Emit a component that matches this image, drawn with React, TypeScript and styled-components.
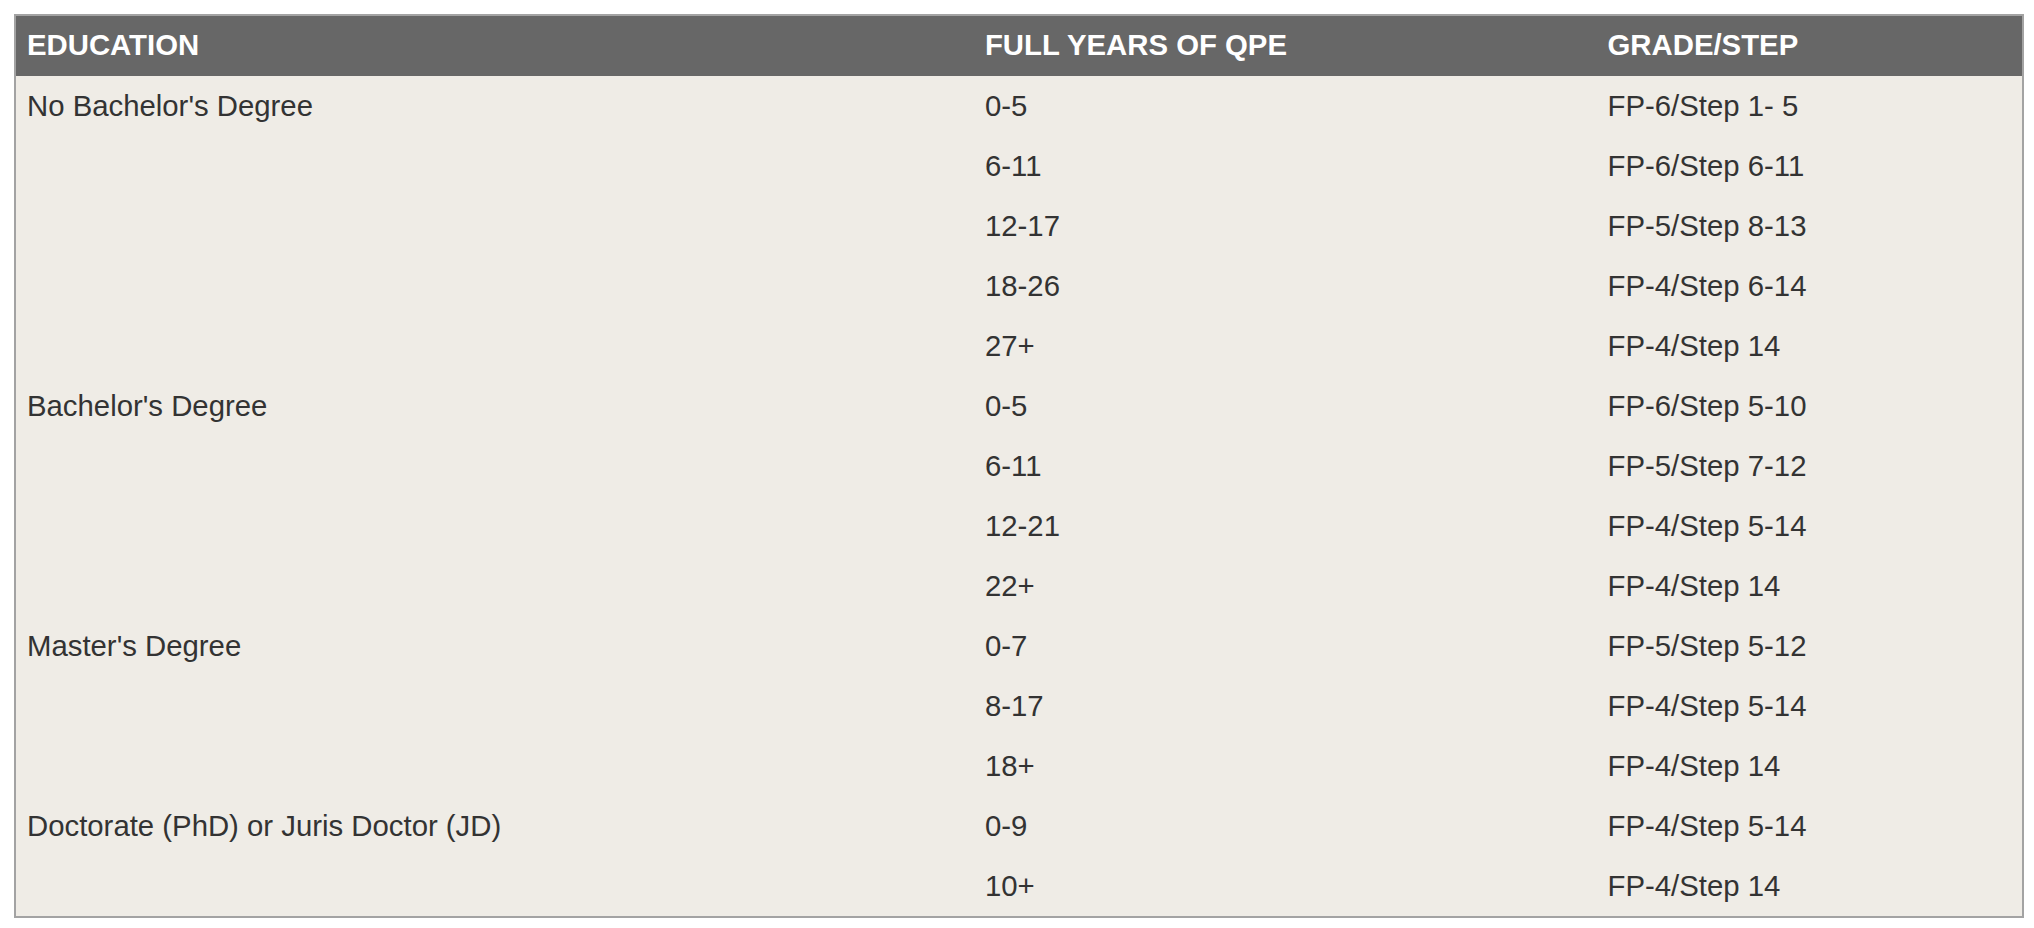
import React from 'react';
import styled, { createGlobalStyle } from 'styled-components';

const GlobalStyle = createGlobalStyle`
    body {
        margin: 14px 10px 0 14px;
        background: #fff;
        font-family: 'Liberation Sans', Arial, sans-serif;
    }
`;

const Table = styled.table`
    width: 100%;
    border-collapse: collapse;
    table-layout: fixed;
    border: 2px solid #a3a3a3;
    background-color: #efece6;
    color: #333;
`;

const HeadRow = styled.tr`
    background-color: #676767;
`;

const Th = styled.th<{ w: string }>`
    width: ${(props) => props.w};
    height: 60px;
    box-sizing: border-box;
    padding: 12px 11px 14px;
    text-align: left;
    vertical-align: top;
    font-size: 29.33px;
    line-height: 34px;
    font-weight: bold;
    color: #fff;
`;

const Td = styled.td`
    height: 60px;
    box-sizing: border-box;
    padding: 13px 11px 13px;
    vertical-align: top;
    font-size: 29.33px;
    line-height: 34px;
    white-space: nowrap;
`;

interface Group {
    education: string;
    rows: [string, string][];
}

const groups: Group[] = [
    {
        education: "No Bachelor's Degree",
        rows: [
            ['0-5', 'FP-6/Step 1- 5'],
            ['6-11', 'FP-6/Step 6-11'],
            ['12-17', 'FP-5/Step 8-13'],
            ['18-26', 'FP-4/Step 6-14'],
            ['27+', 'FP-4/Step 14'],
        ],
    },
    {
        education: "Bachelor's Degree",
        rows: [
            ['0-5', 'FP-6/Step 5-10'],
            ['6-11', 'FP-5/Step 7-12'],
            ['12-21', 'FP-4/Step 5-14'],
            ['22+', 'FP-4/Step 14'],
        ],
    },
    {
        education: "Master's Degree",
        rows: [
            ['0-7', 'FP-5/Step 5-12'],
            ['8-17', 'FP-4/Step 5-14'],
            ['18+', 'FP-4/Step 14'],
        ],
    },
    {
        education: 'Doctorate (PhD) or Juris Doctor (JD)',
        rows: [
            ['0-9', 'FP-4/Step 5-14'],
            ['10+', 'FP-4/Step 14'],
        ],
    },
];

export default function App() {
    return (
        <>
            <GlobalStyle />
            <Table>
                <thead>
                    <HeadRow>
                        <Th w="958px">EDUCATION</Th>
                        <Th w="622px">FULL YEARS OF QPE</Th>
                        <Th w="426px">GRADE/STEP</Th>
                    </HeadRow>
                </thead>
                <tbody>
                    {groups.map((g) =>
                        g.rows.map(([years, grade], i) => (
                            <tr key={g.education + years}>
                                {i === 0 && <Td rowSpan={g.rows.length}>{g.education}</Td>}
                                <Td>{years}</Td>
                                <Td>{grade}</Td>
                            </tr>
                        )),
                    )}
                </tbody>
            </Table>
        </>
    );
}
